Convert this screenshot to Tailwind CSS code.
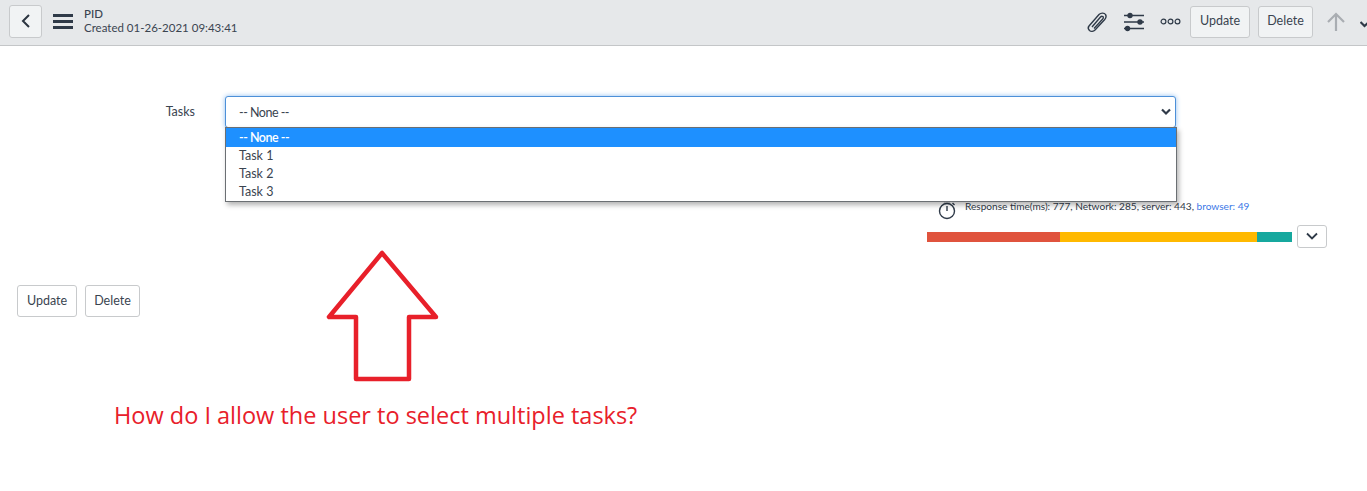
<!DOCTYPE html>
<html>
    <head>
        <meta charset="UTF-8" />
        <meta name="viewport" content="width=device-width, initial-scale=1.0" />
        <script src="https://cdn.jsdelivr.net/npm/@tailwindcss/browser@4"></script>
    </head>
    <body class="bg-white font-['Lato',sans-serif] text-[#3a4450] overflow-hidden">
        <div class="w-[1367px] h-[491px] overflow-hidden">
            <!-- header -->
            <header class="h-[46px] bg-[#e6e8ea] border-b border-[#c4c6c8] flex items-center pl-[9px] pb-[3px] relative">
                <button class="w-[33px] h-[33px] bg-[#f1f3f4] border border-[#c8cacc] rounded-[3px] flex items-center justify-center">
                    <svg width="12" height="16" viewBox="0 0 12 16" fill="none" stroke="#2c3540" stroke-width="2"><path d="M9 2 L3 8 L9 14" /></svg>
                </button>
                <div class="ml-[11px] w-[20px] flex flex-col gap-[3px]">
                    <div class="h-[3px] bg-[#2f3a48]"></div>
                    <div class="h-[3px] bg-[#2f3a48]"></div>
                    <div class="h-[3px] bg-[#2f3a48]"></div>
                </div>
                <div class="ml-[11px] text-[11.5px] leading-[14px]">
                    <div class="font-medium">PID</div>
                    <div>Created 01-26-2021 09:43:41</div>
                </div>

                <div class="ml-auto flex items-center mt-[1px]">
                    <svg class="mr-[16px]" width="22" height="22" viewBox="0 0 22 22" fill="none" stroke="#2f3a48" stroke-width="1.4">
                        <path d="M3 15 L13 3.5 C15 1.5 18.5 1.8 19.5 3.5 C20.5 5 20 7 18.5 8.8 L9 19 C7.5 20.5 5 20.8 3.5 19.5 C2 18 2 16.2 3 15 Z" />
                        <path d="M6 16 L14.5 6 C15.5 5 17 5.2 17.3 6 C17.6 7 17 7.8 16.5 8.3 L8 17.5" />
                    </svg>
                    <svg class="mr-[16px]" width="20" height="20" viewBox="0 0 20 20" stroke="#2f3a48" stroke-width="1.4" fill="#2f3a48">
                        <path d="M0 3.5 H20 M0 10 H20 M0 16.5 H20" />
                        <circle cx="6" cy="3.5" r="2" /><circle cx="16" cy="10" r="2" /><circle cx="3.5" cy="16.5" r="2" />
                    </svg>
                    <svg class="mr-[9px]" width="21" height="7" viewBox="0 0 21 7" fill="none" stroke="#2f3a48" stroke-width="1.2">
                        <circle cx="3.5" cy="3.5" r="2.4" /><circle cx="10.5" cy="3.5" r="2.4" /><circle cx="17.5" cy="3.5" r="2.4" />
                    </svg>
                    <button class="w-[60px] h-[32px] bg-[#f1f3f4] border border-[#c8cacc] rounded-[3px] text-[12.5px] mr-[8px]">Update</button>
                    <button class="w-[55px] h-[32px] bg-[#f1f3f4] border border-[#c8cacc] rounded-[3px] text-[12.5px] mr-[13px]">Delete</button>
                    <svg width="20" height="20" viewBox="0 0 20 20" fill="none" stroke="#a9adb2" stroke-width="2.2" class="mr-[14px]">
                        <path d="M10 19 V2 M2 10 L10 2 L18 10" />
                    </svg>
                    <svg width="7" height="10" viewBox="0 0 7 10" fill="none" stroke="#2f3a48" stroke-width="2.2" class="mt-[4px]">
                        <path d="M0.5 3 L4.5 7 L9 3" />
                    </svg>
                </div>
            </header>

            <main class="relative">
                <!-- form row -->
                <div class="flex items-center pt-[50px]">
                    <label class="w-[195px] text-right text-[12.5px]">Tasks</label>
                    <div class="ml-[30px] w-[951px] h-[32px] relative bg-white border border-[#4d90d8] rounded-[3px] shadow-[0_0_5px_#8dbdf0] flex items-center justify-between pl-[13px] pr-[3px] text-[12.5px]">
                        <span class="mt-[2px] tracking-[-0.5px]">-- None --</span>
                        <svg width="12" height="8" viewBox="0 0 12 8" fill="none" stroke="#2f3a48" stroke-width="2.2"><path d="M2 1.5 L6 5.5 L10 1.5" /></svg>

                        <!-- open list -->
                        <ul class="absolute left-[-1px] top-[30px] w-[952px] bg-white border border-[#6b6f73] shadow-[2px_3px_5px_rgba(0,0,0,0.3)] text-[12.5px] z-10">
                            <li class="h-[19px] leading-[20px] bg-[#1e90ff] text-white font-semibold pl-[13px] tracking-[-0.5px]">-- None --</li>
                            <li class="h-[18px] leading-[18px] pl-[13px]">Task 1</li>
                            <li class="h-[18px] leading-[18px] pl-[13px]">Task 2</li>
                            <li class="h-[18px] leading-[18px] pl-[13px]">Task 3</li>
                        </ul>
                    </div>
                </div>

                <!-- response time -->
                <div class="ml-[927px] w-[400px] mt-[70px] relative">
                    <div class="flex items-start pl-[11px] h-[27px]">
                        <svg width="18" height="20" viewBox="0 0 18 20" fill="none" stroke="#2f3a48" stroke-width="1.4" class="mt-[2px]">
                            <circle cx="9" cy="11" r="7.5" /><path d="M6 1.5 H12 M9 6 V11" /><path d="M14.5 3 L16.5 5" />
                        </svg>
                        <p class="ml-[9px] mt-[1px] text-[10.1px] leading-[14px] text-[#2f3a48] whitespace-nowrap">Response time(ms): 777, Network: 285, server: 443, <span class="text-[#3b78e7]">browser: 49</span></p>
                    </div>
                    <div class="flex items-center">
                        <div class="flex w-[365px] h-[10px]">
                            <div class="w-[133px] bg-[#e0533d]"></div>
                            <div class="w-[197px] bg-[#ffb900]"></div>
                            <div class="w-[35px] bg-[#16a89e]"></div>
                        </div>
                        <button class="ml-[5px] w-[30px] h-[23px] border border-[#c8cacc] rounded-[3px] flex items-center justify-center">
                            <svg width="14" height="9" viewBox="0 0 14 9" fill="none" stroke="#2f3a48" stroke-width="1.8"><path d="M2 1.5 L7 6.5 L12 1.5" /></svg>
                        </button>
                    </div>
                </div>

                <!-- bottom buttons -->
                <div class="flex gap-[8px] pl-[17px] mt-[37px]">
                    <button class="w-[60px] h-[32px] border border-[#c8cacc] rounded-[3px] text-[12.5px]">Update</button>
                    <button class="w-[55px] h-[32px] border border-[#c8cacc] rounded-[3px] text-[12.5px]">Delete</button>
                </div>

                <!-- annotation drawn over the page -->
                <svg class="absolute left-[326px] top-[204px]" width="114" height="134" viewBox="0 0 114 134" fill="none" stroke="#e8202a" stroke-width="4.5" stroke-linejoin="round">
                    <path d="M56 3 L3 67 H30 V129 H83 V67 H110 Z" />
                </svg>
                <p class="absolute left-[114px] top-[353px] font-['Open_Sans',sans-serif] text-[23.5px] leading-[32px] text-[#e8202a] whitespace-nowrap">How do I allow the user to select multiple tasks?</p>
            </main>
        </div>
    </body>
</html>
